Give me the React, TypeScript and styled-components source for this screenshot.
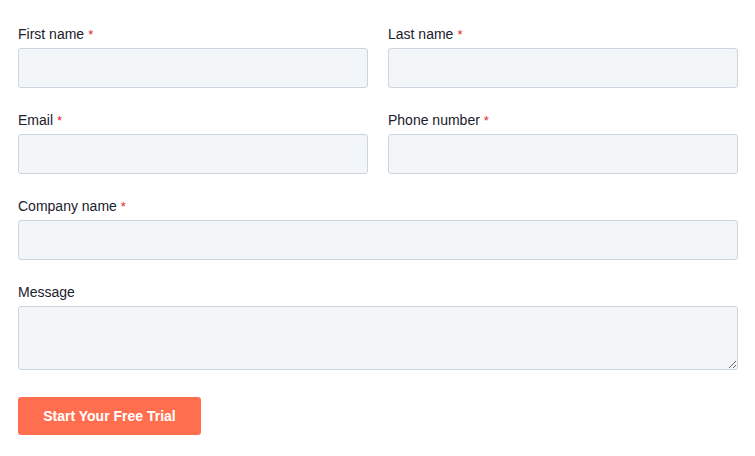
import React from "react";
import styled, { createGlobalStyle } from "styled-components";

const Global = createGlobalStyle`
  html, body { margin: 0; padding: 0; background: #ffffff; }
  body { font-family: "Liberation Sans", Arial, Helvetica, sans-serif; }
  * { box-sizing: border-box; }
`;

const Form = styled.form`
  display: flex;
  flex-direction: column;
  gap: 22px;
  padding: 24px 17px 0 18px;
`;

const Row = styled.div<{ $cols: number }>`
  display: grid;
  grid-template-columns: repeat(${(p) => p.$cols}, 1fr);
  column-gap: 20px;
`;

const Field = styled.div`
  display: flex;
  flex-direction: column;
`;

const Label = styled.label`
  display: block;
  height: 20px;
  font-size: 14px;
  line-height: 20px;
  color: #1a202c;
  margin-bottom: 4px;
`;

const Req = styled.span`
  color: #e3262b;
  margin-left: 4px;
  font-size: 13px;
  line-height: 1;
`;

const Input = styled.input`
  height: 40px;
  width: 100%;
  border: 1px solid #cbd5e0;
  border-radius: 3px;
  background: #f3f6f9;
  padding: 0 12px;
  font: inherit;
  font-size: 14px;
  outline: none;
`;

const TextArea = styled.textarea`
  height: 64px;
  width: 100%;
  border: 1px solid #cbd5e0;
  border-radius: 3px;
  background: #f3f6f9;
  padding: 8px 12px;
  font: inherit;
  font-size: 14px;
  outline: none;
  display: block;
`;

const Actions = styled.div`
  padding-top: 5px;
`;

const Button = styled.button`
  height: 38px;
  width: 183px;
  border: none;
  border-radius: 3px;
  background: #ff6f4f;
  color: #ffffff;
  font-family: "Liberation Sans", Arial, sans-serif;
  font-weight: 700;
  font-size: 14px;
  cursor: pointer;
`;

const F = ({ label, required, children }: { label: string; required?: boolean; children: React.ReactNode }) => (
  <Field>
    <Label>
      {label}
      {required && <Req>*</Req>}
    </Label>
    {children}
  </Field>
);

export default function App() {
  return (
    <>
      <Global />
      <Form onSubmit={(e) => e.preventDefault()}>
        <Row $cols={2}>
          <F label="First name" required><Input /></F>
          <F label="Last name" required><Input /></F>
        </Row>
        <Row $cols={2}>
          <F label="Email" required><Input /></F>
          <F label="Phone number" required><Input /></F>
        </Row>
        <Row $cols={1}>
          <F label="Company name" required><Input /></F>
        </Row>
        <Row $cols={1}>
          <F label="Message"><TextArea /></F>
        </Row>
        <Actions>
          <Button type="submit">Start Your Free Trial</Button>
        </Actions>
      </Form>
    </>
  );
}
